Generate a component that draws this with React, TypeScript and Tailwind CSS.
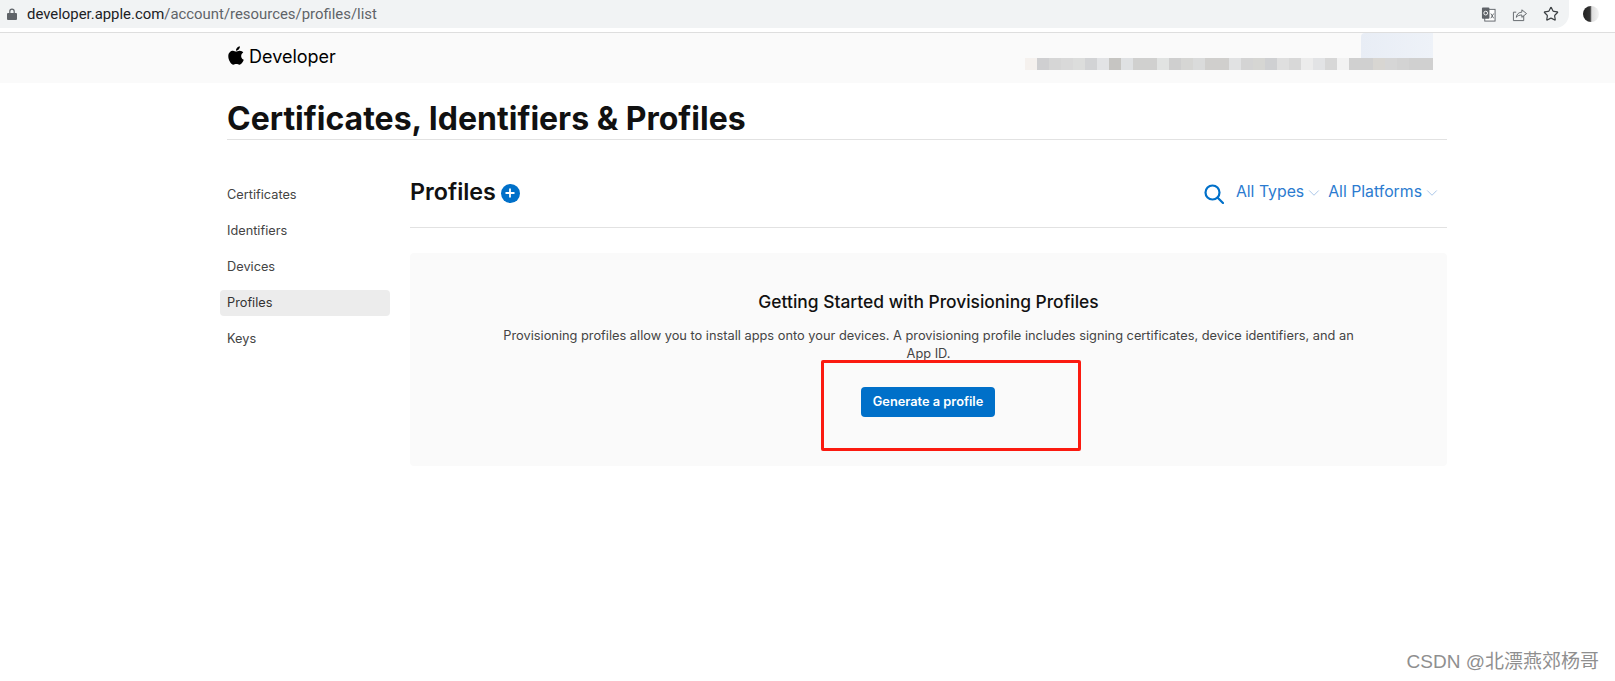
import { ChevronDown, Star } from "lucide-react";
import { FaApple } from "react-icons/fa";

const sidebarItems = ["Certificates", "Identifiers", "Devices", "Profiles", "Keys"];

// mosaic over the account name in the header
const mosaic = [
  "#f5f1ee", "#cfcfd1", "#d6d6d6", "#d9d9d9", "#dcdddc", "#d2d3d5", "#e2e3e5", "#c6c5c2", "#dfe1e3", "#d0d0cf",
  "#d0d0cf", "#e1e3e2", "#cfcfcf", "#d6d6d4", "#dadbdb", "#d0cfcd", "#d0cfcd", "#e1e2e3", "#d4d4d4", "#d6d6d3",
  "#cfd0d2", "#dfdfdf", "#d8d8d8", "#ececec", "#e2e3e5", "#d7d7d7", "#f2f2f2", "#d0d0d0", "#d0d0d0", "#d8d6d2",
  "#d6d6d6", "#d3d3d3", "#d0d0d0", "#d0d0d0",
];

const FilterMenu = ({ label }: { label: string }) => (
  <button className="flex items-center gap-[1px] text-[15.8px] leading-5 text-[#2b7bd0]">
    {label}
    <ChevronDown className="mt-[2px] h-[18px] w-[18px] text-[#8fb4e0]" strokeWidth={1} />
  </button>
);

export default function App() {
  return (
    <div className="relative h-[681px] w-[1615px] overflow-hidden bg-white font-['Inter',sans-serif] text-[#111]">
      {/* browser chrome */}
      <div className="flex h-[32px] items-start bg-white">
        <div className="flex h-[28px] w-[1569px] items-center rounded-br-[14px] bg-[#f1f3f4] pl-[7px]">
          <svg viewBox="0 0 10 12" className="h-[12px] w-[10px] fill-[#5f6368]">
            <path d="M2.2 5V3.4a2.8 2.8 0 0 1 5.6 0V5H9a1 1 0 0 1 1 1v5a1 1 0 0 1-1 1H1a1 1 0 0 1-1-1V6a1 1 0 0 1 1-1zm1.2 0h3.2V3.4a1.6 1.6 0 0 0-3.2 0z" />
          </svg>
          <span className="ml-[10px] font-['Roboto',sans-serif] text-[14.9px] text-[#5f6368]">
            <span className="text-[#202124]">developer.apple.com</span>/account/resources/profiles/list
          </span>
          <div className="ml-auto flex items-center gap-[16px] pr-[10px]">
            <svg viewBox="0 0 16 16" className="h-[15px] w-[15px]">
              <rect x="4" y="2.5" width="11" height="12.5" fill="#fff" stroke="#5f6368" />
              <rect x="1" y="0.5" width="8" height="12" rx="1" fill="#5f6368" />
              <circle cx="5" cy="6.5" r="2" fill="none" stroke="#fff" />
              <path d="M10.5 7l3 5m0-5l-3 5" stroke="#5f6368" fill="none" />
            </svg>
            <svg viewBox="0 0 16 16" className="h-[15px] w-[15px] fill-none stroke-[#5f6368]">
              <path d="M12.5 9.5v5h-11v-9h3" />
              <path d="M4.5 11c.5-3.500 3-5.500 6-5.500V3l5 4-5 4V8.500c-2.500 0-4.500.8-6 2.500z" />
            </svg>
            <Star className="h-[16px] w-[16px] text-[#3c4043]" strokeWidth={1.8} />
          </div>
        </div>
        <div className="ml-[14px] mt-[6px] h-[16px] w-[16px] rounded-full bg-[linear-gradient(90deg,#222_0%,#333_45%,#ddd_55%,#f4f4f4_100%)]" />
      </div>

      {/* global header */}
      <header className="relative h-[51px] border-t border-[#dedede] bg-[#fafafa] pl-[227px]">
        <div className="flex items-center pt-[11px]">
          <FaApple className="h-[21px] w-[18px] -translate-y-[2px] text-black" />
          <span className="ml-[4px] text-[18px] leading-[26px] text-black">Developer</span>
        </div>
        <div className="absolute left-[1361px] top-0 h-[25px] w-[72px] rounded-tl bg-[linear-gradient(90deg,#e8edf5,#eef2f8)]" />
        <div className="absolute left-[1025px] top-[25px] flex h-[12px]">
          {mosaic.map((c, i) => (
            <div key={i} className="h-full w-[12px]" style={{ backgroundColor: c }} />
          ))}
        </div>
      </header>

      <main className="ml-[227px] w-[1220px]">
        <h1 className="border-b border-[#e2e2e2] pb-[1px] pt-[16px] text-[32px] font-bold leading-[39px] text-[#111]">
          Certificates, Identifiers &amp; Profiles
        </h1>

        <div className="flex pt-[35px]">
          <nav className="-ml-[7px] flex w-[170px] shrink-0 flex-col pt-[7px]">
            {sidebarItems.map((item) => (
              <a
                key={item}
                className={`mb-[10px] flex h-[26px] items-center rounded pl-[7px] text-[12.75px] ${
                  item === "Profiles" ? "bg-[#ececec] text-[#333]" : "text-[#444]"
                }`}
              >
                {item}
              </a>
            ))}
          </nav>

          <section className="ml-[20px] flex-1">
            <div className="flex h-[53px] items-start justify-between border-b border-[#e2e2e2]">
              <div className="flex items-center gap-[5px] pt-[2px]">
                <h2 className="text-[23.3px] font-semibold leading-[30px] text-[#111]">Profiles</h2>
                <span className="mt-[2px] flex h-[19px] w-[19px] items-center justify-center rounded-full bg-[#0070c9]">
                  <svg viewBox="0 0 10 10" className="h-[10px] w-[10px] stroke-white" strokeWidth="1.8">
                    <path d="M5 0.500v9M0.500 5h9" />
                  </svg>
                </span>
              </div>
              <div className="flex items-center gap-[5px] pr-[6px] pt-[5px]">
                <svg viewBox="0 0 20 20" className="mr-[7px] mt-[4px] h-[20px] w-[20px] fill-none stroke-[#0070c9]" strokeWidth="2.2">
                  <circle cx="8.500" cy="8.500" r="7" />
                  <path d="M13.500 13.500L19 19" strokeLinecap="round" />
                </svg>
                <FilterMenu label="All Types" />
                <FilterMenu label="All Platforms" />
              </div>
            </div>

            <div className="mt-[25px] flex h-[213px] flex-col items-center rounded bg-[#fafafa] pt-[37px]">
              <h3 className="text-[17.4px] font-[450] leading-6 text-[#111]">Getting Started with Provisioning Profiles</h3>
              <p className="mt-[13px] w-[860px] text-center text-[12.8px] leading-[18px] text-[#444]">
                Provisioning profiles allow you to install apps onto your devices. A provisioning profile includes signing certificates, device identifiers, and an App ID.
              </p>
              <button className="-ml-[1px] mt-[24px] h-[30px] w-[134px] rounded bg-[#0070c9] text-[12.8px] font-semibold text-white">
                Generate a profile
              </button>
            </div>
          </section>
        </div>
      </main>

      {/* annotation drawn over the screenshot */}
      <div className="absolute left-[821px] top-[360px] h-[91px] w-[260px] rounded-[2px] border-[3px] border-[#fb1a10]" />

      {/* watermark */}
      <div className="absolute bottom-[7px] right-[16px] font-['Liberation_Sans','Noto_Sans_CJK_SC',sans-serif] text-[19px] leading-6 text-[#8f8f8f]">
        CSDN @北漂燕郊杨哥
      </div>
    </div>
  );
}
